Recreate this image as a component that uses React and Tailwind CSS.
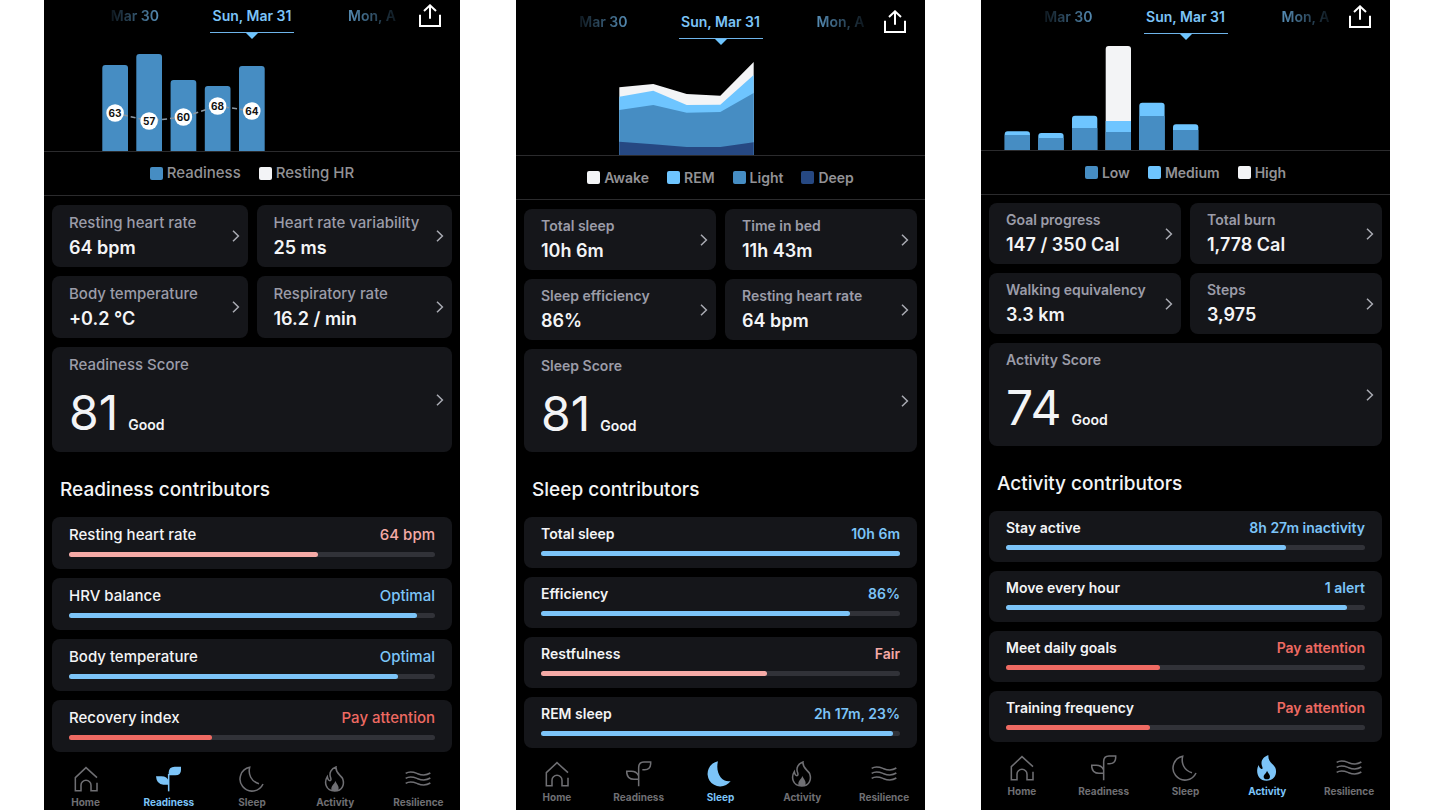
import React from 'react';

const BLUE = '#468dc3';
const SKY = '#6ec5ff';
const SNOW = '#f3f4f6';
const NAVY = '#264882';

const tones = {
    good: { text: 'text-[#7cc4f8]', bar: 'bg-[#7cc4f8]' },
    fair: { text: 'text-[#f5aaa6]', bar: 'bg-[#f5aaa6]' },
    bad: { text: 'text-[#ee6a62]', bar: 'bg-[#ee6a62]' },
};

const ShareIcon = () => (
    <svg viewBox="0 0 66 72" className="h-6 w-[22px]" fill="none" stroke="#fff" strokeWidth="6">
        <path d="M3 32v34h60V32" />
        <path d="M33 44V4M15 21L33 4l18 17" />
    </svg>
);

const Chevron = () => (
    <svg viewBox="0 0 8 12" className="h-3 w-2 flex-none" fill="none" stroke="#a9abb3" strokeWidth="1.5">
        <path d="M1 .8L6.4 6 1 11.2" />
    </svg>
);

const HomeIcon = () => <path d="M72 35L39 5 7 35v39h17V58a15 15 0 0 1 30 0v16h18V50" />;

const SproutIcon = ({ active }) =>
    active ? (
        <>
            <path d="M38 28V20Q38 2 56 2H75V12Q75 28 58 28Z" fill="currentColor" stroke="none" />
            <path d="M0 31H16Q34 31 38 46V56H22Q2 56 0 31Z" fill="currentColor" stroke="none" />
            <path d="M38 76V24" />
        </>
    ) : (
        <>
            <path d="M38 76V20Q38 3 54 3H74V9Q73 26 56 26H49" />
            <path d="M38 55H24Q2 55 2 31H16Q31 31 37 43" />
        </>
    );

const MoonIcon = ({ active }) =>
    active ? (
        <path d="M33 1A38 38 0 1 0 71 60C46 66 24 36 33 1Z" fill="currentColor" stroke="none" />
    ) : (
        <path d="M72 54A36 36 0 1 1 32 4C27 24 36 47 60 53" />
    );

const FlameIcon = ({ active }) =>
    active ? (
        <>
            <path
                d="M14 30C4 48 10 77 38 77C64 77 70 53 64 38C58 26 42 22 43 0C26 6 18 20 25 36C27 42 25 43 22 42C18 40 15 36 14 30Z"
                fill="currentColor"
                stroke="none"
            />
            <path d="M39 47C42 54 49 60 48 66C47 72 43 73 38 73C33 73 29 71 29 65C29 58 37 55 39 47Z" fill="#000" stroke="none" />
        </>
    ) : (
        <>
            <path d="M16 32C6 48 10 75 38 75C62 75 68 54 62 38C56 26 40 22 42 3C28 8 20 20 26 35C28 42 26 44 24 44C20 44 17 38 16 32Z" />
            <path d="M40 45C43 53 50 58 50 66L48 75H28L28 66C29 58 38 54 40 45Z" fill="currentColor" stroke="none" />
        </>
    );

const WavesIcon = () => (
    <path d="M2 22C16 13 28 19 38 23S62 30 76 21M2 37C16 28 28 34 38 38S62 45 76 36M2 52C16 43 28 49 38 53S62 60 76 51" />
);

const navItems = [
    { label: 'Home', Icon: HomeIcon },
    { label: 'Readiness', Icon: SproutIcon },
    { label: 'Sleep', Icon: MoonIcon },
    { label: 'Activity', Icon: FlameIcon },
    { label: 'Resilience', Icon: WavesIcon },
];

// bar with only its upper corners rounded
const barPath = (x, y, w, base) =>
    `M${x} ${base}V${y + 3}q0-3 3-3h${w - 6}q3 0 3 3V${base}z`;

const readiness = [
    { x: 58.3, top: 25, hr: 63, hrY: 73 },
    { x: 92.3, top: 14, hr: 57, hrY: 81 },
    { x: 126.6, top: 40, hr: 60, hrY: 77 },
    { x: 160.8, top: 46, hr: 68, hrY: 66 },
    { x: 195, top: 26, hr: 64, hrY: 71 },
];

const ReadinessChart = () => (
    <svg viewBox="0 0 416 111" className="block w-full">
        {readiness.map((d) => (
            <path key={d.x} d={barPath(d.x, d.top, 25.7, 111)} fill={BLUE} />
        ))}
        <polyline
            points={readiness.map((d) => `${d.x + 12.8},${d.hrY}`).join(' ')}
            fill="none"
            stroke="#8a97a3"
            strokeWidth="1.5"
            strokeDasharray="5 3"
        />
        {readiness.map((d) => (
            <g key={d.hr}>
                <circle cx={d.x + 12.8} cy={d.hrY} r="8.8" fill="#fff" />
                <text x={d.x + 12.8} y={d.hrY + 4} textAnchor="middle" fill="#111" className="text-[10px] font-bold">
                    {d.hr}
                </text>
            </g>
        ))}
    </svg>
);

const SleepChart = () => (
    <svg viewBox="0 0 409 109" className="block w-full">
        <path d="M103.3 109V41.3L137.3 38L170.7 48L204.3 49.7L237.7 16V109Z" fill={SNOW} />
        <path d="M103.3 109V50.7L137.3 44.7L170.7 59L204.3 58.7L237.7 29V109Z" fill={SKY} />
        <path d="M103.3 109V64L137.3 59L170.7 66.7L204.3 66L237.7 47V109Z" fill={BLUE} />
        <path d="M103.3 109V95.7L137.3 98.3L170.7 101H204.3L237.7 96.3V109Z" fill={NAVY} />
    </svg>
);

const activity = [
    { x: 23.7, medium: 90.3, low: 94 },
    { x: 57.3, medium: 92, low: 97 },
    { x: 91, medium: 74.7, low: 87 },
    { x: 124.7, high: 5, medium: 80, low: 91 },
    { x: 158.3, medium: 61.7, low: 75 },
    { x: 192, medium: 83.3, low: 89 },
];

const ActivityChart = () => (
    <svg viewBox="0 0 409 109" className="block w-full">
        {activity.map((d) => (
            <g key={d.x}>
                <path d={barPath(d.x, d.high ?? d.medium, 25.3, 109)} fill={d.high ? SNOW : SKY} />
                {d.high && <rect x={d.x} y={d.medium} width="25.3" height={109 - d.medium} fill={SKY} />}
                <rect x={d.x} y={d.low} width="25.3" height={109 - d.low} fill={BLUE} />
            </g>
        ))}
    </svg>
);

const panels = [
    {
        name: 'Readiness',
        top: 'pt-[6px]',
        bodyTop: 'pt-[9px]',
        cardTop: 'pt-2',
        scoreBottom: 'pb-[11px]',
        navTop: 'pt-[14px]',
        textSize: 'text-[15px] font-medium',
        Chart: ReadinessChart,
        legend: [
            ['Readiness', 'bg-[#468dc3]'],
            ['Resting HR', 'bg-[#f3f4f6]'],
        ],
        stats: [
            ['Resting heart rate', '64 bpm'],
            ['Heart rate variability', '25 ms'],
            ['Body temperature', '+0.2 °C'],
            ['Respiratory rate', '16.2 / min'],
        ],
        score: 81,
        contributors: [
            { label: 'Resting heart rate', value: '64 bpm', pct: 68, tone: 'fair' },
            { label: 'HRV balance', value: 'Optimal', pct: 95, tone: 'good' },
            { label: 'Body temperature', value: 'Optimal', pct: 90, tone: 'good' },
            { label: 'Recovery index', value: 'Pay attention', pct: 39, tone: 'bad' },
        ],
    },
    {
        name: 'Sleep',
        top: 'pt-[12px]',
        bodyTop: 'pt-[9px]',
        cardTop: 'pt-[7px]',
        scoreBottom: 'pb-[10px]',
        navTop: 'pt-[13px]',
        textSize: 'text-[14px] font-semibold',
        Chart: SleepChart,
        legend: [
            ['Awake', 'bg-[#f3f4f6]'],
            ['REM', 'bg-[#6ec5ff]'],
            ['Light', 'bg-[#468dc3]'],
            ['Deep', 'bg-[#264882]'],
        ],
        stats: [
            ['Total sleep', '10h 6m'],
            ['Time in bed', '11h 43m'],
            ['Sleep efficiency', '86%'],
            ['Resting heart rate', '64 bpm'],
        ],
        score: 81,
        contributors: [
            { label: 'Total sleep', value: '10h 6m', pct: 100, tone: 'good' },
            { label: 'Efficiency', value: '86%', pct: 86, tone: 'good' },
            { label: 'Restfulness', value: 'Fair', pct: 63, tone: 'fair' },
            { label: 'REM sleep', value: '2h 17m, 23%', pct: 98, tone: 'good' },
        ],
    },
    {
        name: 'Activity',
        top: 'pt-[7px]',
        bodyTop: 'pt-2',
        cardTop: 'pt-[7px]',
        scoreBottom: 'pb-[10px]',
        navTop: 'pt-[13px]',
        textSize: 'text-[14px] font-semibold',
        Chart: ActivityChart,
        legend: [
            ['Low', 'bg-[#468dc3]'],
            ['Medium', 'bg-[#6ec5ff]'],
            ['High', 'bg-[#f3f4f6]'],
        ],
        stats: [
            ['Goal progress', '147 / 350 Cal'],
            ['Total burn', '1,778 Cal'],
            ['Walking equivalency', '3.3 km'],
            ['Steps', '3,975'],
        ],
        score: 74,
        contributors: [
            { label: 'Stay active', value: '8h 27m inactivity', pct: 78, tone: 'good' },
            { label: 'Move every hour', value: '1 alert', pct: 95, tone: 'good' },
            { label: 'Meet daily goals', value: 'Pay attention', pct: 43, tone: 'bad' },
            { label: 'Training frequency', value: 'Pay attention', pct: 40, tone: 'bad' },
        ],
    },
];

const DateHeader = ({ top }) => (
    <header className={`grid grid-cols-[1fr_84px_1fr] items-start text-[14px] leading-5 font-semibold text-[#7cc4f8] ${top}`}>
        <div className="flex justify-end pr-[51px]">
            <button className="whitespace-nowrap text-[#5f9cc9] [mask-image:linear-gradient(to_right,rgba(0,0,0,0.15),rgba(0,0,0,0.9))]">
                Mar 30
            </button>
        </div>
        <div className="flex flex-col items-center">
            <button className="whitespace-nowrap">Sun, Mar 31</button>
            <div className="mt-[6px] h-px w-full bg-[#6eb4ea]" />
            <svg viewBox="0 0 12 6" className="mb-px h-[6px] w-3" fill={SKY}>
                <path d="M0 0h12L6 6z" />
            </svg>
        </div>
        <div className="flex h-5 items-center justify-between pr-[19px] pl-[54px]">
            <button className="whitespace-nowrap text-[#5f9cc9] [mask-image:linear-gradient(to_left,rgba(0,0,0,0.15),rgba(0,0,0,0.9))]">
                Mon, A
            </button>
            <button aria-label="Share" className="flex-none">
                <ShareIcon />
            </button>
        </div>
    </header>
);

const StatCard = ({ label, value, cardTop, textSize }) => (
    <button className="flex items-center justify-between rounded-lg bg-[#15161a] pr-2 pl-[17px] text-left">
        <span className={`block pb-[5px] ${cardTop}`}>
            <span className={`block leading-5 whitespace-nowrap text-[#9b9ca8] ${textSize}`}>{label}</span>
            <span className="mt-px block text-[18px] leading-7 font-semibold whitespace-nowrap text-[#f3f4f6]">{value}</span>
        </span>
        <Chevron />
    </button>
);

const Contributor = ({ label, value, pct, tone, cardTop, textSize }) => (
    <li className={`rounded-lg bg-[#15161a] px-[17px] pb-3 ${cardTop}`}>
        <div className={`flex justify-between leading-5 ${textSize}`}>
            <span className="text-[#f3f4f6]">{label}</span>
            <span className={tones[tone].text}>{value}</span>
        </div>
        <div className="mt-[7px] h-[5px] rounded-full bg-[#313238]">
            <div className={`h-full rounded-full ${tones[tone].bar}`} style={{ width: `${pct}%` }} />
        </div>
    </li>
);

const Panel = ({ name, top, bodyTop, cardTop, scoreBottom, navTop, textSize, Chart, legend, stats, score, contributors }) => (
    <section className="min-w-0 bg-black">
        <DateHeader top={top} />
        <Chart />
        <div className={`flex h-[45px] items-center justify-center gap-[18px] border-y border-[#2b2b2d] text-[#929296] ${textSize}`}>
            {legend.map(([label, color]) => (
                <div key={label} className="flex items-center gap-1">
                    <span className={`h-[13px] w-[13px] rounded-xs ${color}`} />
                    {label}
                </div>
            ))}
        </div>

        <div className={`px-2 ${bodyTop}`}>
            <div className="grid grid-cols-2 gap-[9px]">
                {stats.map(([label, value]) => (
                    <StatCard key={label} label={label} value={value} cardTop={cardTop} textSize={textSize} />
                ))}
            </div>

            <button className="mt-[9px] flex w-full items-center justify-between rounded-lg bg-[#15161a] pr-2 pl-[17px] text-left">
                <span className={`block ${cardTop} ${scoreBottom}`}>
                    <span className={`block leading-5 text-[#9b9ca8] ${textSize}`}>{name} Score</span>
                    <span className="mt-[10px] flex items-baseline gap-[10px] text-[#f3f4f6]">
                        <span className="text-[48px] leading-[56px]">{score}</span>
                        <span className="text-[14px] font-semibold">Good</span>
                    </span>
                </span>
                <Chevron />
            </button>

            <h2 className="mt-6 mb-[13px] pl-2 text-[19px] leading-7 font-medium text-[#f3f4f6]">{name} contributors</h2>
            <ul className="flex flex-col gap-[9px]">
                {contributors.map((c) => (
                    <Contributor key={c.label} {...c} cardTop={cardTop} textSize={textSize} />
                ))}
            </ul>
        </div>

        <nav className={`flex ${navTop}`}>
            {navItems.map(({ label, Icon }) => (
                <a
                    key={label}
                    href="#"
                    className={`flex flex-1 flex-col items-center text-[10px] leading-[14px] font-bold ${
                        label === name ? 'text-[#7cc4f8]' : 'text-[#6f6f73]'
                    }`}
                >
                    <svg viewBox="0 0 78 78" className="mb-[3px] h-[26px] w-[26px]" fill="none" stroke="currentColor" strokeWidth="4.6">
                        <Icon active={label === name} />
                    </svg>
                    {label}
                </a>
            ))}
        </nav>
    </section>
);

const App = () => {
    return (
        <main className="grid min-h-screen grid-cols-[416fr_409fr_409fr] gap-14 bg-white pr-[50px] pl-11 font-['Inter',sans-serif]">
            {panels.map((panel) => (
                <Panel key={panel.name} {...panel} />
            ))}
        </main>
    );
};

export default App;
